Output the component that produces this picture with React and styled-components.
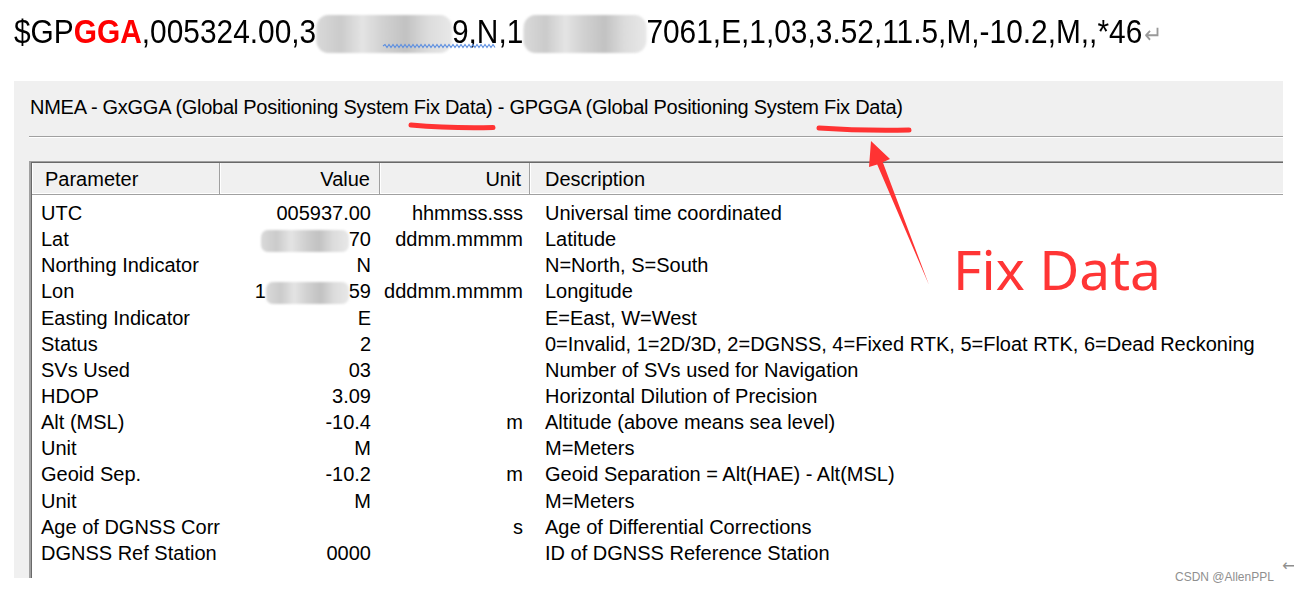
import React from 'react';
import styled, { createGlobalStyle } from 'styled-components';

const Global = createGlobalStyle`
  html, body { margin: 0; padding: 0; background: #fff; }
  body { width: 1294px; height: 592px; overflow: hidden; font-family: "Liberation Sans", Arial, sans-serif; }
`;

const Page = styled.div`
  position: relative;
  width: 1294px;
  height: 592px;
  box-sizing: border-box;
  padding-left: 14px;
  display: flex;
  flex-direction: column;
`;

const Sentence = styled.div`
  height: 81px;
  box-sizing: border-box;
  padding-top: 12px;
  font-family: "Liberation Sans", Arial, sans-serif;
  font-size: 33px;
  line-height: 40px;
  color: #000;
  white-space: nowrap;
  transform: scaleX(0.905);
  transform-origin: left top;
`;

const Keyword = styled.span`
  color: #ff0000;
  font-weight: bold;
`;

const ReturnMark = styled.span`
  color: #9a9a9a;
  font-family: "DejaVu Sans", sans-serif;
  font-size: 24px;
  margin-left: 2px;
`;

const Redacted = styled.span`
  display: inline-block;
  vertical-align: middle;
  width: ${p => p.$w}px;
  height: ${p => p.$h}px;
  border-radius: ${p => Math.round(p.$h / 3)}px;
  background: linear-gradient(90deg, #d9d9d9 0%, #cbcbcb 18%, #e4e4e4 34%, #d0d0d0 50%, #c2c2c2 66%, #dcdcdc 82%, #e8e8e8 100%);
  filter: blur(1.2px);
`;

const Panel = styled.section`
  width: 1269px;
  height: 497px;
  box-sizing: border-box;
  background: #f0f0f0;
  overflow: hidden;
  padding-left: 15px;
  display: flex;
  flex-direction: column;
  font-family: "Liberation Sans", Arial, sans-serif;
  font-size: 20px;
  color: #000;
`;

const Title = styled.div`
  margin-top: 14px;
  padding-left: 1px;
  line-height: 24px;
  letter-spacing: -0.27px;
  white-space: nowrap;
`;

const Separator = styled.div`
  margin-top: 17px;
  border-top: 1px solid #a0a0a0;
  border-bottom: 1px solid #ffffff;
`;

const ListView = styled.div`
  margin-top: 23px;
  margin-right: -40px;
  flex: 1;
  border-top: 1px solid #a0a0a0;
  border-left: 2px solid #a0a0a0;
  display: flex;
`;

const ListInner = styled.div`
  flex: 1;
  border-top: 1px solid #696969;
  border-left: 1px solid #696969;
  background: #fff;
  display: flex;
  flex-direction: column;
`;

const COLS = '188px 160px 150px 1fr';

const Header = styled.div`
  display: grid;
  grid-template-columns: ${COLS};
  height: 30px;
  background: #f0f0f0;
`;

const HeaderCell = styled.div`
  box-sizing: border-box;
  border-right: 1px solid #a0a0a0;
  border-bottom: 1px solid #a0a0a0;
  box-shadow: inset 1px 0 0 #ffffff;
  line-height: 30px;
  padding-top: 1px;
  white-space: nowrap;
  text-align: ${p => p.$align};
  padding-left: ${p => p.$pl || 0}px;
  padding-right: ${p => p.$pr || 0}px;
`;

const Body = styled.div`
  padding-top: 7px;
`;

const Row = styled.div`
  display: grid;
  grid-template-columns: ${COLS};
  height: 26.15px;
  line-height: 26px;
`;

const Cell = styled.div`
  white-space: nowrap;
  text-align: ${p => p.$align};
  padding-left: ${p => p.$pl || 0}px;
  padding-right: ${p => p.$pr || 0}px;
`;

const Overlay = styled.svg`
  position: absolute;
  left: 0;
  top: 0;
  pointer-events: none;
`;

const Callout = styled.span`
  position: absolute;
  left: 953px;
  top: 236px;
  font-family: "Noto Sans", "Open Sans", sans-serif;
  font-size: 55px;
  line-height: 66px;
  color: #ff3535;
  white-space: nowrap;
`;

const Watermark = styled.span`
  position: absolute;
  left: 1175px;
  top: 569px;
  font-family: "Liberation Sans", Arial, sans-serif;
  font-size: 12px;
  line-height: 16px;
  color: #8f8f8f;
  white-space: nowrap;
`;

const EdgeArrow = styled.span`
  position: absolute;
  left: 1282px;
  top: 556px;
  font-family: "DejaVu Sans", sans-serif;
  font-size: 16px;
  line-height: 20px;
  color: #8f8f8f;
`;

const rows = [
  ['UTC', '005937.00', 'hhmmss.sss', 'Universal time coordinated'],
  ['Lat', <><Redacted $w={88} $h={22} />70</>, 'ddmm.mmmm', 'Latitude'],
  ['Northing Indicator', 'N', '', 'N=North, S=South'],
  ['Lon', <>1<Redacted $w={83} $h={22} />59</>, 'dddmm.mmmm', 'Longitude'],
  ['Easting Indicator', 'E', '', 'E=East, W=West'],
  ['Status', '2', '', '0=Invalid, 1=2D/3D, 2=DGNSS, 4=Fixed RTK, 5=Float RTK, 6=Dead Reckoning'],
  ['SVs Used', '03', '', 'Number of SVs used for Navigation'],
  ['HDOP', '3.09', '', 'Horizontal Dilution of Precision'],
  ['Alt (MSL)', '-10.4', 'm', 'Altitude (above means sea level)'],
  ['Unit', 'M', '', 'M=Meters'],
  ['Geoid Sep.', '-10.2', 'm', 'Geoid Separation = Alt(HAE) - Alt(MSL)'],
  ['Unit', 'M', '', 'M=Meters'],
  ['Age of DGNSS Corr', '', 's', 'Age of Differential Corrections'],
  ['DGNSS Ref Station', '0000', '', 'ID of DGNSS Reference Station'],
];

function squiggle(x0, x1, y) {
  let d = `M${x0} ${y}`;
  let up = true;
  for (let x = x0 + 2; x <= x1; x += 2) {
    d += ` L${x} ${up ? y - 1.5 : y + 1.5}`;
    up = !up;
  }
  return d;
}

export default function App() {
  return (
    <>
      <Global />
      <Page>
        <Sentence>
          $GP<Keyword>GGA</Keyword>,005324.00,3<Redacted $w={150} $h={38} />9,N,1<Redacted $w={136} $h={38} />7061,E,1,03,3.52,11.5,M,-10.2,M,,*46<ReturnMark>↵</ReturnMark>
        </Sentence>
        <Panel>
          <Title>NMEA - GxGGA (Global Positioning System Fix Data) - GPGGA (Global Positioning System Fix Data)</Title>
          <Separator />
          <ListView>
            <ListInner>
              <Header>
                <HeaderCell $align="left" $pl={13}>Parameter</HeaderCell>
                <HeaderCell $align="right" $pr={9}>Value</HeaderCell>
                <HeaderCell $align="right" $pr={8}>Unit</HeaderCell>
                <HeaderCell $align="left" $pl={15}>Description</HeaderCell>
              </Header>
              <Body>
                {rows.map((r, i) => (
                  <Row key={i}>
                    <Cell $align="left" $pl={9}>{r[0]}</Cell>
                    <Cell $align="right" $pr={9}>{r[1]}</Cell>
                    <Cell $align="right" $pr={7}>{r[2]}</Cell>
                    <Cell $align="left" $pl={15}>{r[3]}</Cell>
                  </Row>
                ))}
              </Body>
            </ListInner>
          </ListView>
        </Panel>

        <Overlay width="1294" height="592" viewBox="0 0 1294 592">
          <path d={squiggle(383, 495, 46)} fill="none" stroke="#5b8ee0" strokeWidth="1.1" />
          <path d="M411 125 Q450 128.5 493 127.5" fill="none" stroke="#ff3333" strokeWidth="5" strokeLinecap="round" />
          <path d="M819 128 Q862 131 909 130" fill="none" stroke="#ff3333" strokeWidth="5" strokeLinecap="round" />
          <polygon points="871,141 890,159 882.8,162.2 929,285 877.2,164.4 869,167" fill="#ff3333" />
        </Overlay>
        <Callout>Fix Data</Callout>
        <Watermark>CSDN @AllenPPL</Watermark>
        <EdgeArrow>←</EdgeArrow>
      </Page>
    </>
  );
}
